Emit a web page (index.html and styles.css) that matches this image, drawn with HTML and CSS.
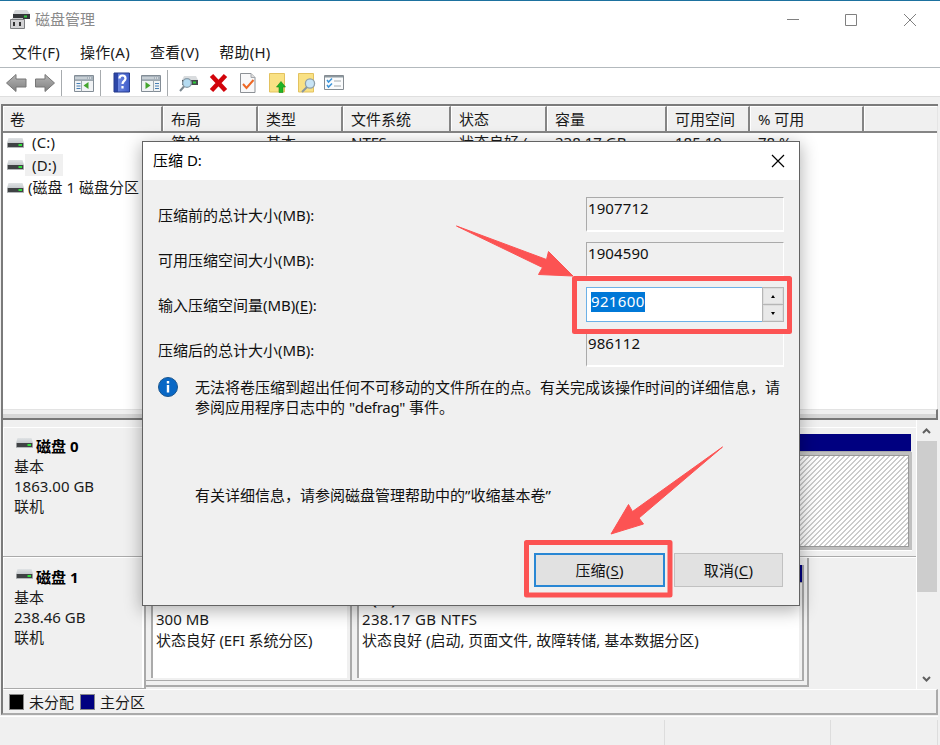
FILE: index.html
```html
<!DOCTYPE html>
<html lang="zh-CN">
<head>
<meta charset="utf-8">
<title>磁盘管理</title>
<link rel="stylesheet" href="styles.css">
</head>
<body>
<svg width="0" height="0" class="defs">
  <defs>
    <linearGradient id="lid" x1="0" y1="0" x2="0" y2="1"><stop offset="0" stop-color="#e0e3e5"/><stop offset="1" stop-color="#c6cacd"/></linearGradient>
    <linearGradient id="arrow" x1="0" y1="0" x2="0" y2="1"><stop offset="0" stop-color="#b5b5b5"/><stop offset="1" stop-color="#808080"/></linearGradient>
    <linearGradient id="help" x1="0" y1="0" x2="1" y2="0"><stop offset="0" stop-color="#2c46a8"/><stop offset=".25" stop-color="#2c46a8"/><stop offset=".26" stop-color="#6b86e0"/><stop offset="1" stop-color="#3f5cc8"/></linearGradient>
    <symbol id="drive" viewBox="0 0 17 10"><path d="M1.500 0h14L17 5H0z" fill="url(#lid)"/><path d="M.5 5h16v4H.5z" fill="#3f4244"/><path d="M0 9h17v1H0z" fill="#b4b8ba"/><path d="M11.500 6h3.500v2h-3.500z" fill="#2fe03a"/></symbol>
  </defs>
</svg>
<div class="window">
  <header class="titlebar">
    <svg class="app-icon" width="20" height="19" viewBox="0 0 20 19"><path d="M5 0h12l3 4H3z" fill="#d5d8da"/><path d="M3 4h17v5H3z" fill="#34373a"/><path d="M14 5.500h3v2h-3z" fill="#35c840"/><path d="M2 8h11v3H2z" fill="#c8cacc"/><path d="M.5 9.500h14v9H.5z" fill="#d3d3d5" stroke="#7c7e80"/><path d="M3 12h2v4H3zM9 12h2v4H9z" fill="#333"/></svg>
    <span class="app-name">磁盘管理</span>
    <svg class="controls" width="130" height="14" viewBox="0 0 130 14" fill="none" stroke="#808080"><path d="M0 6.500h12M58.500 1.500h11v11h-11zM117 1l12 12M129 1L117 13"/></svg>
  </header>
  <nav class="menubar"><span>文件(F)</span><span>操作(A)</span><span>查看(V)</span><span>帮助(H)</span></nav>
  <div class="toolbar">
    <svg width="340" height="22" viewBox="0 0 340 22">
      <g fill="url(#arrow)" stroke="#777"><path d="M.5 11L10 2.500V7h10v8H10v4.500z"/><path d="M48.500 11L39 2.500V7H29.500v8H39v4.500z"/></g>
      <path d="M55.500-2v26M94.500-2v26M161.500-2v26" stroke="#a7abae"/>
      <g><path d="M68.500 3.500h19v16h-19z" fill="#f1f3f5" stroke="#838d96"/><path d="M69 4h18v4H69z" fill="#a7b2bb"/><path d="M69 6h12" stroke="#e7ecef"/><path d="M82 6h1m1 0h1" stroke="#fff"/><path d="M75.500 8.500v11M69 8.500h18" stroke="#9da7af"/><path d="M70.500 11.500h4m-4 2.500h4m-4 2.500h4" stroke="#477fb5"/><path d="M82.500 10v7L77.500 13.500z" fill="#45a52e"/></g>
      <g><path d="M108 1h15.500v19h-15.500z" fill="url(#help)" stroke="#243b8c"/><path d="M113.500 6.500c0-4 6-4 6 0 0 2.500-3 2.300-3 5.500m0 2v2.500" fill="none" stroke="#fff" stroke-width="2.200"/></g>
      <g><path d="M135.500 3.500h19v16h-19z" fill="#f1f3f5" stroke="#838d96"/><path d="M136 4h18v4h-18z" fill="#a7b2bb"/><path d="M136 6h12" stroke="#e7ecef"/><path d="M149 6h1m1 0h1" stroke="#fff"/><path d="M147.500 8.500v11M136 8.500h18" stroke="#9da7af"/><path d="M149 11.500h4m-4 2.500h4m-4 2.500h4" stroke="#477fb5"/><path d="M139.500 10v7l5-3.500z" fill="#45a52e"/></g>
      <g><path d="M178 4h12l2 4h-16z" fill="#d9dcde"/><path d="M176 8h16v5h-16z" fill="#45494c"/><path d="M187 9.500h3v2h-3z" fill="#2fcf3a"/><circle cx="181" cy="11" r="4.300" fill="#b4dbf1" stroke="#8a9da9" stroke-width="1.300"/><path d="M178 14.500l-4 4.500" stroke="#7b8890" stroke-width="2"/></g>
      <path d="M205.500 3.500l14 15M219.500 3.500l-14 15" stroke="#d2040b" stroke-width="4.600"/>
      <g><path d="M234.500 1.500h10.500l4 4v15h-14.500z" fill="#f8f8f9" stroke="#8d9196"/><path d="M245 1.500v4h4" fill="#ddd" stroke="#a5a8ac"/><path d="M237 12l3.500 4 7-8" fill="none" stroke="#ee6825" stroke-width="2"/></g>
      <g><path d="M263.500 1.500h15v18.500h-15z" fill="#f9e184" stroke="#e3c25f"/><path d="M270.500 15l4.500-5.500 4.500 5.500h-2.500v5.500h-4v-5.500z" fill="#20b524" stroke="#14861a" stroke-width=".6"/></g>
      <g><path d="M292.500 1.500h15v18.500h-15z" fill="#f9e184" stroke="#e3c25f"/><circle cx="304" cy="11.500" r="4.600" fill="#c8e4f5" stroke="#8fa0aa" stroke-width="1.300"/><path d="M301 15l-5 5" stroke="#8997a0" stroke-width="2"/></g>
      <g><path d="M318.500 3.500h19v14h-19z" fill="#fafbfc" stroke="#858c92"/><path d="M319 4h18v1.500h-18z" fill="#8d989f"/><path d="M321 8l1.500 2L326 6.500M321 13l1.500 2 3.500-3.500" fill="none" stroke="#3c94d9" stroke-width="1.500"/><path d="M328 9h7m-7 5h7" stroke="#a2a9ae"/></g>
    </svg>
  </div>
  <main class="client">
    <section class="volumes">
      <div class="cols head"><span>卷</span><span>布局</span><span>类型</span><span>文件系统</span><span>状态</span><span>容量</span><span>可用空间</span><span>% 可用</span><span></span></div>
      <div class="cols row"><span class="vol"><svg width="17" height="10"><use href="#drive"/></svg><b>(C:)</b></span><span>简单</span><span>基本</span><span>NTFS</span><span>状态良好 (</span><span>238.17 GB</span><span>185.19</span><span>78 %</span></div>
      <div class="cols row"><span class="vol"><svg width="17" height="10"><use href="#drive"/></svg><b class="selected">(D:)</b></span><span></span><span></span><span></span><span></span><span></span><span></span><span>100 %</span></div>
      <div class="cols row"><span class="vol last"><svg width="17" height="10"><use href="#drive"/></svg><b>(磁盘 1 磁盘分区</b></span><span></span><span></span><span></span><span></span><span></span><span></span><span>100 %</span></div>
    </section>
    <div class="splitter"></div>
    <section class="disks">
      <div class="disk-list">
        <div class="disk">
          <div class="label"><div class="name"><svg width="17" height="10"><use href="#drive"/></svg>磁盘 0</div><div>基本</div><div>1863.00 GB</div><div>联机</div></div>
          <div class="map full"><div class="bar"></div><div class="hatch-frame"><div class="hatch"></div></div></div>
        </div>
        <div class="disk second">
          <div class="label"><div class="name"><svg width="17" height="10"><use href="#drive"/></svg>磁盘 1</div><div>基本</div><div>238.46 GB</div><div>联机</div></div>
          <div class="map parts">
            <div class="part efi"><div class="bar"></div><div class="info"><div class="pname"></div><div>300 MB</div><div class="efi-state">状态良好 (EFI 系统分区)</div></div></div>
            <div class="part sys"><div class="bar"></div><div class="info"><div class="pname">(C:)</div><div class="wide">238.17 GB NTFS</div><div>状态良好 (启动, 页面文件, 故障转储, 基本数据分区)</div></div></div>
          </div>
        </div>
      </div>
      <div class="scrollbar">
        <svg width="20" height="20" viewBox="0 0 20 20"><path d="M6 12l3.500-3.500L13 12" fill="none" stroke="#606060" stroke-width="2"/></svg>
        <div class="thumb"></div>
        <svg class="down" width="20" height="20" viewBox="0 0 20 20"><path d="M6 8l3.500 3.500L13 8" fill="none" stroke="#606060" stroke-width="2"/></svg>
      </div>
    </section>
    <footer class="legend"><i class="swatch black"></i><span>未分配</span><i class="swatch navy"></i><span>主分区</span></footer>
  </main>
  <div class="status"><span></span><span></span><span></span></div>
</div>

<div class="dialog">
  <div class="dialog-title"><span>压缩 D:</span><svg width="14" height="14" viewBox="0 0 14 14"><path d="M1 1l12 12M13 1L1 13" stroke="#000" stroke-width="1.200"/></svg></div>
  <div class="form">
    <label>压缩前的总计大小(MB):</label><div class="field">1907712</div>
    <label>可用压缩空间大小(MB):</label><div class="field">1904590</div>
    <label>输入压缩空间量(MB)(<u>E</u>):</label>
    <div class="field edit"><span class="value">921600</span><div class="spin"><i class="up"></i><i class="dn"></i></div></div>
    <label>压缩后的总计大小(MB):</label><div class="field">986112</div>
  </div>
  <div class="notice">
    <svg width="20" height="20" viewBox="0 0 20 20"><circle cx="10" cy="10" r="9.500" fill="#0867c5" stroke="#1a568f"/><path d="M10 8v7.500M10 4v2.500" stroke="#fff" stroke-width="2.400"/></svg>
    <p>无法将卷压缩到超出任何不可移动的文件所在的点。有关完成该操作时间的详细信息，请<br>参阅应用程序日志中的 <span class="latin">"defrag"</span> 事件。</p>
  </div>
  <p class="more">有关详细信息，请参阅磁盘管理帮助中的”收缩基本卷”</p>
  <div class="actions"><div class="button primary">压缩(<u>S</u>)</div><div class="button">取消(<u>C</u>)</div></div>
</div>
<svg class="marks" width="940" height="745" viewBox="0 0 940 745">
  <g fill="none" stroke="#fc5353" stroke-width="5" stroke-linejoin="round"><path d="M574.500 278.500h215v53h-215zM526.500 542.500h143.500v52.500h-143.500z"/></g>
  <g fill="#fc5353" stroke="#fc5353" stroke-linejoin="round"><path d="M456.500 226L546.500 259.500 548.500 251.500 573 276 538.500 274.500 542.500 267.500z"/><path d="M722.500 447L632.500 511.500 628.500 504.500 611 534 643.500 524 639 518z"/></g>
</svg>
</body>
</html>
```
FILE: styles.css
```css
* { box-sizing: border-box; }
body { margin: 0; width: 940px; height: 745px; overflow: hidden; background: #f0f0f0; color: #1a1a1a; font: 15px/20px "Noto Sans", "Noto Sans CJK SC", sans-serif; }
p { margin: 0; }
svg { display: block; flex: none; }
u { text-underline-offset: 2px; text-decoration-thickness: 1px; }
.defs { position: absolute; }
.window { width: 940px; height: 745px; display: flex; flex-direction: column; }
.titlebar { height: 38px; border-top: 1px solid #1d719f; background: #fff; display: flex; align-items: center; padding: 0 23px 0 10px; }
.app-name { margin: -2px 0 0 5px; color: #8a8a8a; }
.controls { margin-left: auto; }
.menubar { height: 29px; background: #fff; display: flex; gap: 20px; padding: 4px 0 0 12px; letter-spacing: .25px; }
.toolbar { height: 30px; border-top: 1px solid #b3b9bd; border-bottom: 1px solid #dfdfdf; background: #fff; padding: 4px 0 0 6px; }
.toolbar svg { overflow: visible; }
.client { margin: 7px 2px 0 1px; height: 611px; border: solid #7b7b7b; border-width: 2px 0 2px 2px; border-bottom-color: #aaa; display: flex; flex-direction: column; }
.volumes { height: 304px; background: #fff; overflow: hidden; border-right: 1px solid #e5e5e5; }
.cols { display: grid; grid-template-columns: 160px 95px 85px 108px 96px 120px 83px 114px 1fr; white-space: nowrap; }
.head { height: 27px; background: #f0f0f0; border-bottom: 2px solid #858585; }
.head span { border-right: 2px solid #858585; border-left: 1px solid #fff; border-top: 1px solid #fff; padding: 2px 0 0 7px; }
.head span:first-child { padding-left: 6px; }
.head span:last-child { border-right: 0; }
.row { height: 22.500px; line-height: 22px; }
.row > span { padding-left: 8px; margin-top: -2px; height: 22px; overflow: hidden; }
.row > span.vol { padding-left: 4px; display: flex; align-items: center; }
.vol b { font-weight: normal; margin-left: 1px; padding: 0 6px 0 7px; letter-spacing: .15px; }
.vol svg { margin-top: 1px; }
.vol .selected { background: #f0f0f0; }
.vol.last b { padding: 0; margin-left: 4px; letter-spacing: 0; }
.splitter { height: 11px; flex: none; border-top: 1px solid #e3e3e3; border-bottom: 2px solid #777; box-shadow: inset 0 -4px #d7d7d7; border-right: 2px solid #777; }
.disks { height: 270px; display: flex; }
.disk-list { width: 914px; padding-top: 7px; border-right: 1px solid #fff; }
.disk { height: 130px; display: flex; border-top: 1px solid #fff; border-bottom: 1px solid #aaa; }
.second { height: 132px; border-bottom: 0; }
.label { width: 143px; border-right: 2px solid #aaa; border-left: 1px solid #fff; padding: 8px 0 0 10px; line-height: 20px; box-shadow: inset -2px 0 #fff; }
.second .label { border-bottom: 1px solid #aaa; padding-top: 9px; }
.name { font-weight: bold; display: flex; color: #000; }
.name svg { margin: 2px 3px 0 2px; }
.full { width: 766px; height: 123px; padding-top: 6px; border-bottom: 2px solid #fff; }
.bar { height: 18px; background: #000080; border-bottom: 1px solid #aaa; }
.full .bar { margin-right: 1px; }
.hatch-frame { height: 98px; background: #c0c0c0; padding: 3px; }
.hatch { height: 92px; border: 1px solid #999; background: repeating-linear-gradient(135deg, #fff 0 2.400px, #ccc 2.400px 3.536px); }
.parts { display: flex; width: 663px; height: 129px; border: solid #aaa; border-width: 0 2px 2px 0; padding: 7px 3px 4px 0; }
.part { border: solid #aaa; border-width: 0 2px 1px 0; }
.efi { width: 206px; }
.sys { width: 452px; }
.info { margin: 1px 3px 3px 5px; height: 94px; padding: 5px 0 0 3px; background: #fff; border-left: 2px solid #aaa; line-height: 20.300px; white-space: nowrap; }
.pname { height: 20.300px; font-weight: bold; padding-left: 10px; }
.wide { letter-spacing: .3px; }
.efi-state { letter-spacing: -.1px; }
.scrollbar { width: 21px; background: #f0f0f0; padding: 1px 1px 0 0; display: flex; flex-direction: column; }
.thumb { height: 151px; background: #cdcdcd; }
.down { margin-top: auto; }
.legend { height: 24px; border-top: 1px solid #fff; border-right: 2px solid #aaa; display: flex; align-items: center; padding-left: 5px; }
.swatch { width: 15px; height: 16px; border: 1px solid #888; margin: 0 5px 0 1px; }
.black { background: #000; }
.navy { background: #000080; margin-left: 6px; }
.status { flex: 1; margin: 1px 2px 0 0; border-top: 1px solid #fff; display: grid; grid-template-columns: 665px 166px 1fr; padding-top: 3px; }
.status span { border-right: 1px solid #ddd; }

.dialog { position: absolute; left: 142px; top: 141px; width: 658px; height: 465px; border: 1px solid #636363; background: #f0f0f0; box-shadow: 0 4px 16px 1px rgba(0,0,0,.3); display: flex; flex-direction: column; color: #111; }
.dialog-title { height: 38px; background: #fff; display: flex; justify-content: space-between; align-items: center; padding: 0 14px 0 10px; color: #000; }
.dialog-title span { margin-top: -2px; }
.form { display: grid; grid-template-columns: 428px 198px; grid-auto-rows: 35px; row-gap: 10px; padding: 17px 0 0 15px; }
.form label { padding-top: 8px; }
.field { border: 1px solid #aaa; border-right-color: #fff; border-bottom: 2px solid #fff; padding: 0 1px; line-height: 21px; letter-spacing: .1px; }
.edit { border: 1px solid #6db1e7; background: #fff; display: flex; justify-content: space-between; padding: 0; }
.value { height: 20px; line-height: 18px; margin: 4px 0 0 4px; background: #0078d7; color: #fff; letter-spacing: .35px; }
.spin { width: 22px; height: 35px; margin: -1px; border: 1px solid #b6b6b6; background: #b6b6b6; display: flex; flex-direction: column; gap: 1px; }
.spin i { flex: 1; border: 1px solid #ddd; background: #e9e9e9; display: flex; align-items: center; justify-content: center; }
.spin i::after { content: ""; border: 2.500px solid transparent; border-top-width: 0; border-bottom: 3px solid #000; }
.spin .dn::after { transform: rotate(180deg); }
.notice { display: flex; gap: 17px; padding: 10px 0 0 15px; line-height: 20.300px; white-space: nowrap; }
.latin { letter-spacing: -.3px; }
.more { padding: 67px 0 0 52px; }
.actions { display: flex; gap: 10px; padding: 48px 0 0 391px; }
.button { width: 109px; height: 34px; background: #e1e1e1; border: 1px solid #c1c1c1; line-height: 32px; text-align: center; letter-spacing: .2px; }
.primary { width: 131px; border: 2px solid #2987d4; line-height: 30px; margin-right: -1px; }
.marks { position: absolute; left: 0; top: 0; }
```
